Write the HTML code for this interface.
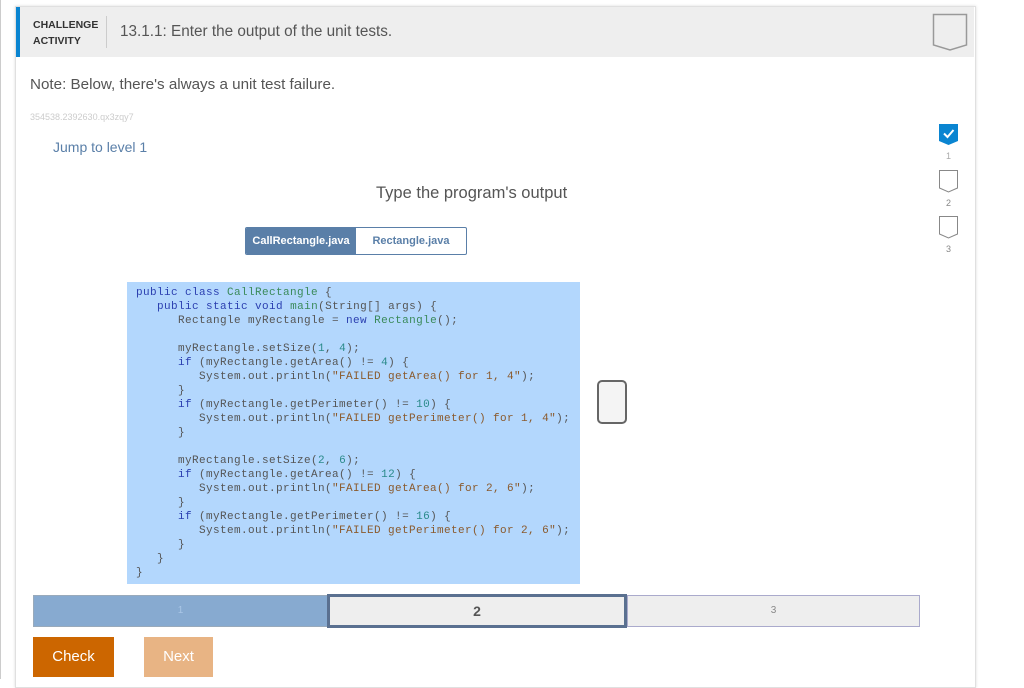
<!DOCTYPE html>
<html><head><style>
body{margin:0;width:1024px;height:679px;background:#fff;font-family:"Liberation Sans",sans-serif;position:relative;overflow:hidden}
.a{position:absolute}
.code{font-family:"Liberation Mono",monospace;font-size:11px;letter-spacing:0.4px;line-height:14px;white-space:pre;color:#555}
.k{color:#2b3fb0}.t{color:#3a8a5a}.s{color:#8a5a2d}.n{color:#2a8a8a}
</style></head><body>
<div class="a" style="left:0;top:0;width:1px;height:679px;background:#ccc"></div>
<div class="a" style="left:15px;top:6px;width:959px;height:680px;border:1px solid #e0e0e0;box-shadow:0 0 3px #ddd"></div>
<div class="a" style="left:16px;top:7px;width:958px;height:50px;background:#eeeeee"></div>
<div class="a" style="left:16px;top:7px;width:4px;height:50px;background:#0a85d1"></div>
<div class="a" style="left:33px;top:17px;font-size:10.5px;font-weight:bold;line-height:16px;color:#333">CHALLENGE<br>ACTIVITY</div>
<div class="a" style="left:106px;top:16px;width:1px;height:32px;background:#ccc"></div>
<div class="a" style="left:120px;top:23px;font-size:15.3px;color:#555">13.1.1: Enter the output of the unit tests.</div>
<svg class="a" style="left:932px;top:13px" width="36" height="38"><path d="M1.5 1.5H34.5V32L18 37L1.5 32Z" fill="#eee" stroke="#999" stroke-width="1.5"/></svg>
<div class="a" style="left:30px;top:76px;font-size:15.2px;color:#555">Note: Below, there's always a unit test failure.</div>
<div class="a" style="left:30px;top:112px;font-size:9px;color:#ccc">354538.2392630.qx3zqy7</div>
<div class="a" style="left:53px;top:139px;font-size:14px;color:#5a7fa8">Jump to level 1</div>
<svg class="a" style="left:939px;top:124px" width="20" height="22"><path d="M0 0H19V17L9.5 21L0 17Z" fill="#0a85d1"/><path d="M5 9.5L8.5 13L14.5 6" fill="none" stroke="#fff" stroke-width="2"/></svg>
<div class="a" style="left:946px;top:151px;font-size:9px;color:#aaa">1</div>
<svg class="a" style="left:939px;top:170px" width="20" height="23"><path d="M.5 .5H18.5V18L9.5 22L.5 18Z" fill="#fff" stroke="#888"/></svg>
<div class="a" style="left:946px;top:198px;font-size:9px;color:#888">2</div>
<svg class="a" style="left:939px;top:216px" width="20" height="23"><path d="M.5 .5H18.5V18L9.5 22L.5 18Z" fill="#fff" stroke="#888"/></svg>
<div class="a" style="left:946px;top:244px;font-size:9px;color:#888">3</div>
<div class="a" style="left:376px;top:184px;font-size:16.5px;color:#555">Type the program's output</div>
<div class="a" style="left:245px;top:227px;width:220px;height:26px;border:1px solid #5a7fa8;border-radius:2px;overflow:hidden;font-size:11px;font-weight:bold">
<div class="a" style="left:0;top:0;width:110px;height:26px;background:#5a7fa8;color:#fff;line-height:26px;text-align:center">CallRectangle.java</div>
<div class="a" style="left:110px;top:0;width:110px;height:26px;color:#5a7fa8;line-height:26px;text-align:center">Rectangle.java</div></div>
<div class="a code" style="left:127px;top:282px;width:444px;height:298px;background:#b3d7fd;padding:4px 0 0 9px"><span class="k">public class</span> <span class="t">CallRectangle</span> {
   <span class="k">public static void</span> <span class="t">main</span>(String[] args) {
      Rectangle myRectangle = <span class="k">new</span> <span class="t">Rectangle</span>();

      myRectangle.setSize(<span class="n">1</span>, <span class="n">4</span>);
      <span class="k">if</span> (myRectangle.getArea() != <span class="n">4</span>) {
         System.out.println(<span class="s">"FAILED getArea() for 1, 4"</span>);
      }
      <span class="k">if</span> (myRectangle.getPerimeter() != <span class="n">10</span>) {
         System.out.println(<span class="s">"FAILED getPerimeter() for 1, 4"</span>);
      }

      myRectangle.setSize(<span class="n">2</span>, <span class="n">6</span>);
      <span class="k">if</span> (myRectangle.getArea() != <span class="n">12</span>) {
         System.out.println(<span class="s">"FAILED getArea() for 2, 6"</span>);
      }
      <span class="k">if</span> (myRectangle.getPerimeter() != <span class="n">16</span>) {
         System.out.println(<span class="s">"FAILED getPerimeter() for 2, 6"</span>);
      }
   }
}</div>
<div class="a" style="left:597px;top:380px;width:30px;height:44px;border:2px solid #666;border-radius:5px;background:#f4f4f4;box-sizing:border-box"></div>
<div class="a" style="left:33px;top:595px;width:295px;height:32px;background:#87aad0;border:1px solid #9ab;box-sizing:border-box;color:#aac6e6;font-size:10px;text-align:center;line-height:30px">1</div>
<div class="a" style="left:627px;top:595px;width:293px;height:32px;background:#eee;border:1px solid #aac;box-sizing:border-box;color:#888;font-size:10px;text-align:center;line-height:30px">3</div>
<div class="a" style="left:327px;top:594px;width:300px;height:34px;background:#eee;border:3px solid #5a7090;box-sizing:border-box;color:#555;font-size:14px;font-weight:bold;text-align:center;line-height:28px">2</div>
<div class="a" style="left:33px;top:637px;width:81px;height:40px;background:#cc6600;color:#fff;font-size:15px;text-align:center;line-height:40px">Check</div>
<div class="a" style="left:144px;top:637px;width:69px;height:40px;background:#e8b484;color:#fff;font-size:15px;text-align:center;line-height:40px">Next</div>
</body></html>
